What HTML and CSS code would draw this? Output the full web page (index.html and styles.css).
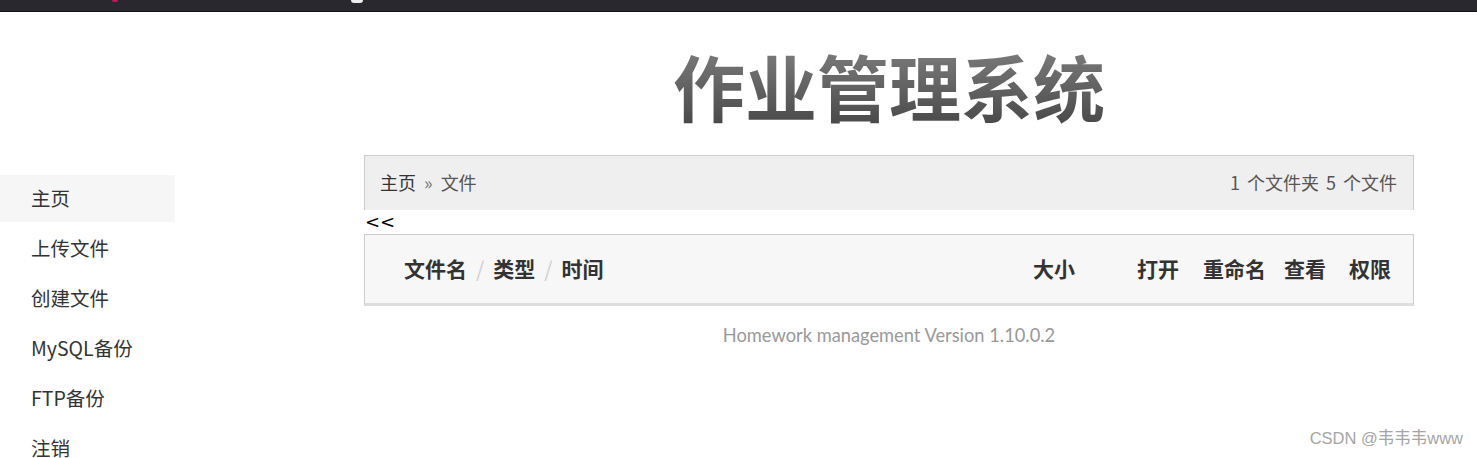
FILE: index.html
```html
<!DOCTYPE html>
<html lang="zh-CN">
<head>
<meta charset="utf-8">
<title>作业管理系统</title>
<link rel="stylesheet" href="styles.css">
</head>
<body>
<div class="topbar"><span class="tb-pink"></span><span class="tb-white"></span></div>
<div class="page">
  <nav class="sidebar">
    <a class="nav-item active">主页</a>
    <a class="nav-item">上传文件</a>
    <a class="nav-item">创建文件</a>
    <a class="nav-item">MySQL备份</a>
    <a class="nav-item">FTP备份</a>
    <a class="nav-item">注销</a>
  </nav>
  <main class="main">
    <h1 class="title">作业管理系统</h1>
    <div class="crumbs">
      <div class="crumb-path"><span class="crumb-home">主页</span><span class="crumb-sep">»</span><span class="crumb-cur">文件</span></div>
      <div class="crumb-count">1 个文件夹 5 个文件</div>
    </div>
    <div class="back">&lt;&lt;</div>
    <div class="thead">
      <div class="th th-name">文件名<span class="slash">/</span>类型<span class="slash">/</span>时间</div>
      <div class="th th-size">大小</div>
      <div class="th th-open">打开</div>
      <div class="th th-rename">重命名</div>
      <div class="th th-view">查看</div>
      <div class="th th-perm">权限</div>
    </div>
    <div class="footer">Homework management Version 1.10.0.2</div>
  </main>
</div>
<div class="watermark">CSDN @韦韦韦www</div>
</body>
</html>
```
FILE: styles.css
```css
html, body {
  margin: 0;
  padding: 0;
  background: #fff;
}
body {
  font-family: "Noto Sans CJK SC", "Noto Sans", sans-serif;
  color: #333;
  height: 458px;
  overflow: hidden;
  position: relative;
}
.topbar {
  height: 11px;
  background: #29282f;
  border-bottom: 1px solid #111;
  display: flex;
  align-items: flex-start;
}
.tb-pink {
  width: 6px;
  height: 2px;
  background: #c2185b;
  border-radius: 0 0 3px 3px;
  margin-left: 112px;
}
.tb-white {
  width: 12px;
  height: 3px;
  background: #eee;
  border-radius: 0 0 6px 6px;
  margin-left: 233px;
}
.page {
  display: grid;
  grid-template-columns: 175px 1050px;
  column-gap: 189px;
}
.sidebar {
  padding-top: 163px;
  display: flex;
  flex-direction: column;
  gap: 3px;
}
.nav-item {
  display: block;
  height: 47px;
  line-height: 45px;
  padding-left: 31px;
  font-size: 19.5px;
  color: #333;
}
.nav-item.active {
  background: #f6f6f6;
}
.main {
  display: flex;
  flex-direction: column;
}
.title {
  margin: 30px 0 27px;
  height: 86px;
  line-height: 86px;
  text-align: center;
  font-size: 72px;
  font-weight: 700;
  background: linear-gradient(#808080, #474747);
  -webkit-background-clip: text;
  background-clip: text;
  color: transparent;
}
.crumbs {
  height: 52px;
  background: #efefef;
  border: 1px solid #ccc;
  border-bottom: none;
  display: flex;
  justify-content: space-between;
  align-items: center;
  padding: 0 16px 2px 15px;
  font-size: 18px;
}
.crumb-home { color: #333; }
.crumb-sep {
  color: #777;
  margin: 0 8px;
}
.crumb-cur { color: #555; }
.crumb-count {
  color: #555;
  word-spacing: 3px;
}
.back {
  font-family: "DejaVu Sans", sans-serif;
  font-size: 18px;
  line-height: 24px;
  height: 24px;
  color: #000;
  padding-left: 1px;
}
.thead {
  height: 66px;
  background: #f7f7f7;
  border: 1px solid #ccc;
  border-bottom: 3px solid #ddd;
  display: flex;
  align-items: center;
  padding: 0 21px 2px 0;
  font-size: 21px;
  font-weight: 700;
  color: #333;
}
.th-name {
  flex: 1;
  padding-left: 39px;
}
.slash {
  color: #d0d0d0;
  font-weight: 400;
  margin: 0 9px;
}
.th-size { width: 104px; }
.th-open { width: 66px; }
.th-rename { width: 81px; }
.th-view { width: 65px; }
.th-perm { width: 43px; }
.footer {
  margin-top: 17px;
  line-height: 24px;
  text-align: center;
  font-family: Lato, "Open Sans", sans-serif;
  font-size: 18.3px;
  color: #999;
}
.watermark {
  position: absolute;
  right: 14px;
  bottom: 9px;
  font-family: "Liberation Sans", "Noto Sans CJK SC", sans-serif;
  font-size: 16.5px;
  color: #a5a5a5;
}
```
